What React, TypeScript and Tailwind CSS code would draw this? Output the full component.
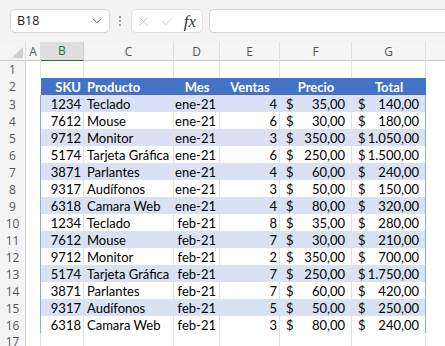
import React from "react";
import { ChevronDown, X, Check, EllipsisVertical } from "lucide-react";

type Row = [number, string, string, number, string, string];

const data: Row[] = [
  [1234, "Teclado", "ene-21", 4, "35,00", "140,00"],
  [7612, "Mouse", "ene-21", 6, "30,00", "180,00"],
  [9712, "Monitor", "ene-21", 3, "350,00", "1.050,00"],
  [5174, "Tarjeta Gráfica", "ene-21", 6, "250,00", "1.500,00"],
  [3871, "Parlantes", "ene-21", 4, "60,00", "240,00"],
  [9317, "Audífonos", "ene-21", 3, "50,00", "150,00"],
  [6318, "Camara Web", "ene-21", 4, "80,00", "320,00"],
  [1234, "Teclado", "feb-21", 8, "35,00", "280,00"],
  [7612, "Mouse", "feb-21", 7, "30,00", "210,00"],
  [9712, "Monitor", "feb-21", 2, "350,00", "700,00"],
  [5174, "Tarjeta Gráfica", "feb-21", 7, "250,00", "1.750,00"],
  [3871, "Parlantes", "feb-21", 7, "60,00", "420,00"],
  [9317, "Audífonos", "feb-21", 5, "50,00", "250,00"],
  [6318, "Camara Web", "feb-21", 3, "80,00", "240,00"],
];

const cols = "grid grid-cols-[26px_15px_43px_90px_46px_60px_72px_74px_1fr]";
const letters = ["A", "B", "C", "D", "E", "F", "G", ""];

function RowNum({ n }: { n: number }) {
  return (
    <div className="flex items-center justify-center border-r border-b border-[#d4d4d4] bg-[#f5f5f5] text-[12px] text-[#555] [font-family:'Open_Sans',sans-serif]">
      {n}
    </div>
  );
}

function Blank({ last }: { last?: boolean }) {
  return <div className={`bg-white border-b border-[#e1e1e1] ${last ? "" : "border-r"}`} />;
}

function Money({ value }: { value: string }) {
  return (
    <div className="flex items-center justify-between pl-[6px] pr-[6px]">
      <span>$</span>
      <span>{value}</span>
    </div>
  );
}

export default function App() {
  return (
    <div className="w-[445px] h-[346px] overflow-hidden bg-[#f3f3f3] [font-family:'Lato',sans-serif]">
      {/* Formula bar */}
      <div className="h-[42px] flex items-center pl-[10px]">
        <div className="w-[100px] h-[24px] bg-white border border-[#d6d6d6] rounded-[5px] flex items-center justify-between pl-[6px] pr-[5px] text-[12.5px] text-[#222] [font-family:'Open_Sans',sans-serif]">
          <span>B18</span>
          <ChevronDown size={14} strokeWidth={1.5} className="text-[#444]" />
        </div>
        <EllipsisVertical size={14} strokeWidth={2} className="ml-[3px] text-[#999]" />
        <div className="ml-[4px] w-[72px] h-[24px] bg-white border border-[#e0e0e0] rounded-[5px] flex items-center pl-[4px] pr-[4px] justify-between">
          <X size={15} strokeWidth={1.2} className="text-[#bdbdbd]" />
          <Check size={15} strokeWidth={1.2} className="text-[#bdbdbd]" />
          <span className="italic text-[17px] leading-none text-[#333] [font-family:'Liberation_Serif',serif] pr-[2px]">fx</span>
        </div>
        <div className="ml-[6px] flex-1 h-[24px] bg-white border border-[#d6d6d6] border-r-0 rounded-l-[5px]" />
      </div>

      {/* Column headers */}
      <div className={`${cols} h-[19px] bg-[#f5f5f5] border-b border-[#c8c8c8] text-[12px] text-[#555] [font-family:'Open_Sans',sans-serif]`}>
        <div className="relative border-r border-[#e0e0e0]">
          <div className="absolute right-[2px] bottom-[3px] w-0 h-0 border-l-[11px] border-l-transparent border-b-[11px] border-b-[#d0d0d0]" />
        </div>
        {letters.map((l, i) =>
          l === "B" ? (
            <div key={i} className="flex items-center justify-center bg-[#dedede] border-r border-[#d0d0d0] border-b-2 border-b-[#1e7145] text-[#1e7145] mb-[-1px]">
              {l}
            </div>
          ) : (
            <div key={i} className={`flex items-center justify-center ${l ? "border-r border-[#e0e0e0]" : ""}`}>
              {l}
            </div>
          )
        )}
      </div>

      {/* Row 1 */}
      <div className={`${cols} h-[17px]`}>
        <RowNum n={1} />
        {[0, 1, 2, 3, 4, 5, 6, 7].map((i) => (
          <Blank key={i} last={i === 7} />
        ))}
      </div>

      {/* Row 2: table header */}
      <div className={`${cols} h-[17px] text-[13px]`}>
        <RowNum n={2} />
        <div className="bg-white border-b border-[#e1e1e1]" />
        <div className="bg-[#4472c4] text-white font-bold flex items-center justify-end pr-[3px]">SKU</div>
        <div className="bg-[#4472c4] text-white font-bold flex items-center pl-[3px]">Producto</div>
        <div className="bg-[#4472c4] text-white font-bold flex items-center justify-center">Mes</div>
        <div className="bg-[#4472c4] text-white font-bold flex items-center justify-center">Ventas</div>
        <div className="bg-[#4472c4] text-white font-bold flex items-center justify-center">Precio</div>
        <div className="bg-[#4472c4] text-white font-bold flex items-center justify-center">Total</div>
        <div className="bg-white border-b border-[#e1e1e1]" />
      </div>

      {/* Table body */}
      {data.map((r, idx) => {
        const band = idx % 2 === 0;
        const bg = band ? "bg-[#d9e1f2]" : "bg-white";
        const vr = band ? "border-r border-r-[#d9e1f2]" : "border-r border-r-[#e1e1e1]";
        const cell = `${bg} ${vr} border-b border-b-[#8ea9db] flex items-center text-[13px] text-black`;
        return (
          <div key={idx} className={`${cols} h-[17px]`}>
            <RowNum n={idx + 3} />
            <div className="bg-white border-b border-[#e1e1e1] border-r border-r-[#8ea9db]" />
            <div className={`${cell} justify-end pr-[2px]`}>{r[0]}</div>
            <div className={`${cell} pl-[3px]`}>{r[1]}</div>
            <div className={`${cell} justify-end pr-[3px]`}>{r[2]}</div>
            <div className={`${cell} justify-end pr-[2px]`}>{r[3]}</div>
            <div className={cell}>
              <div className="flex-1">
                <Money value={r[4]} />
              </div>
            </div>
            <div className={`${bg} border-r border-r-[#8ea9db] border-b border-b-[#8ea9db] flex items-center text-[13px] text-black`}>
              <div className="flex-1">
                <Money value={r[5]} />
              </div>
            </div>
            <div className="bg-white border-b border-[#e1e1e1]" />
          </div>
        );
      })}

      {/* Row 17 */}
      <div className={`${cols} h-[17px]`}>
        <RowNum n={17} />
        {[0, 1, 2, 3, 4, 5, 6, 7].map((i) => (
          <Blank key={i} last={i === 7} />
        ))}
      </div>
    </div>
  );
}
